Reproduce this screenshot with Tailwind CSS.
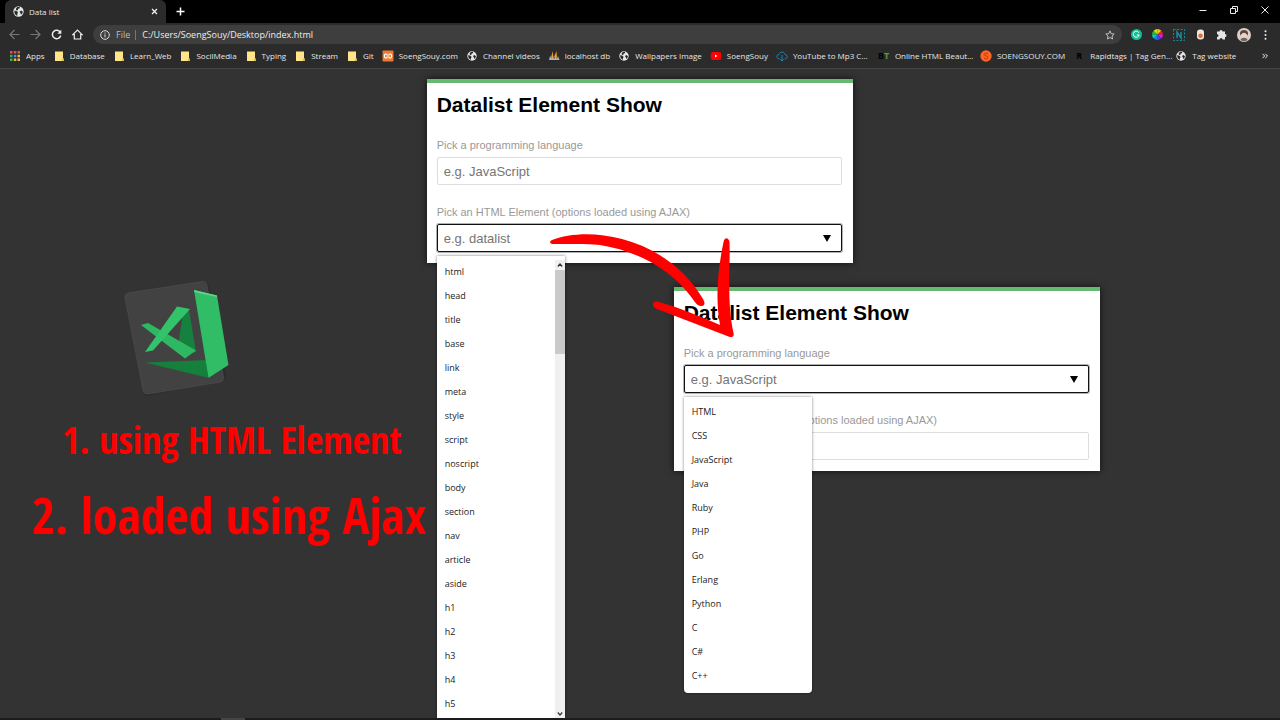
<!DOCTYPE html>
<html lang="en">
<head>
    <meta charset="UTF-8" />
    <meta name="viewport" content="width=device-width, initial-scale=1.0" />
    <title>Data list</title>
    <script src="https://cdn.jsdelivr.net/npm/@tailwindcss/browser@4"></script>
</head>
<body class="bg-[#333333] font-['Liberation_Sans',Arial,sans-serif]">
    <!-- Shared icons -->
    <svg class="hidden">
        <symbol id="globe" viewBox="0 0 16 16">
            <circle cx="8" cy="8" r="7.5" fill="#e8e8e8" />
            <path d="M2 6.500 6.500 8l.8 2.200-1 .8v3C3.500 13.500 1.500 11 2 6.500zM6 1.500l4-.3-.5 2.300-2 .5-.5 2-2 .5L4 4.500zM9.500 8l2.500-1.500 2.300 1.800c-.3 2.200-1.500 3.700-2.800 4.500L11 10.500z" fill="#2b2b2b" />
        </symbol>
        <symbol id="folder" viewBox="0 0 12 12">
            <path d="M2 1.500h8V8l.6.8V11H2z" fill="#ffe48a" />
            <path d="M8.800 8.500h1.800V11H8.800z" fill="#e6bf52" />
        </symbol>
    </svg>

    <div class="flex h-screen flex-col overflow-hidden">
        <header class="shrink-0 bg-[#2b2b2b] font-['Open_Sans','Noto_Sans',sans-serif] text-[9px] leading-3 text-[#e6e6e6]">
            <!-- Tabs -->
            <div class="flex h-[23px] items-center bg-black">
                <div class="ml-[5px] flex h-full w-[161px] items-center gap-[5px] rounded-t-md bg-[#2b2b2b] pr-2 pl-2 text-[8px]">
                    <svg class="size-[11px]"><use href="#globe" /></svg>
                    <span class="flex-1">Data list</span>
                    <button aria-label="Close tab">
                        <svg class="size-[7px]" viewBox="0 0 7 7" stroke="#f0f0f0" stroke-width="1.300"><path d="M1 1l5 5M6 1 1 6" /></svg>
                    </button>
                </div>
                <button class="ml-[10px]" aria-label="New tab">
                    <svg class="size-[9px]" viewBox="0 0 9 9" stroke="#fff" stroke-width="1.500"><path d="M4.500.5v8M.5 4.500h8" /></svg>
                </button>
                <div class="mr-[11px] ml-auto flex items-center gap-[23px] pb-[3px]">
                    <button aria-label="Minimize">
                        <svg class="size-2" viewBox="0 0 8 8" stroke="#eee"><path d="M.5 4.500h7" /></svg>
                    </button>
                    <button aria-label="Restore">
                        <svg class="size-2" viewBox="0 0 8 8" stroke="#eee" fill="none"><path d="M.5 2.500h5v5h-5zM2.500 2.500v-2h5v5h-2" /></svg>
                    </button>
                    <button aria-label="Close">
                        <svg class="size-2" viewBox="0 0 8 8" stroke="#eee"><path d="M.5.5l7 7M7.500.5l-7 7" /></svg>
                    </button>
                </div>
            </div>

            <!-- Toolbar -->
            <div class="flex h-[23px] items-center pr-[10px] pl-[9px]">
                <div class="flex w-[84px] items-center gap-[10px]">
                    <button aria-label="Back">
                        <svg class="size-[11px]" viewBox="0 0 11 11" fill="none" stroke="#777" stroke-width="1.200"><path d="M10.500 5.500H1M5.500 1 1 5.500 5.500 10" /></svg>
                    </button>
                    <button aria-label="Forward">
                        <svg class="size-[11px]" viewBox="0 0 11 11" fill="none" stroke="#777" stroke-width="1.200"><path d="M.5 5.500H10M5.500 1 10 5.500 5.500 10" /></svg>
                    </button>
                    <button aria-label="Reload">
                        <svg class="size-[11px]" viewBox="0 0 11 11" fill="none" stroke="#eee" stroke-width="1.500"><path d="M9.300 3.500A4.200 4.200 0 1 0 9.700 6.500" /><path d="M10.300.8v4H6.300z" fill="#eee" stroke="none" /></svg>
                    </button>
                    <button aria-label="Home">
                        <svg class="size-[11px]" viewBox="0 0 11 11" fill="none" stroke="#eee" stroke-width="1.200"><path d="M.8 5.700 5.500 1l4.700 4.700H8.700V10H2.300V5.700z" /></svg>
                    </button>
                </div>
                <div class="flex h-[19px] flex-1 items-center rounded-full bg-[#3e3e3e] pr-[7px] pl-[7px]">
                    <svg class="mr-[6px] size-[10px]" viewBox="0 0 10 10" fill="none" stroke="#ddd"><circle cx="5" cy="5" r="4.300" /><path d="M5 4.300v3M5 2.500v1" /></svg>
                    <span class="mr-[5px] text-[#bdbdbd]">File</span>
                    <span class="mr-[6px] h-[10px] w-px bg-[#777]"></span>
                    <input type="text" aria-label="Address" value="C:/Users/SoengSouy/Desktop/index.html" class="min-w-0 flex-1 bg-transparent text-[#eee] outline-none" />
                    <button aria-label="Bookmark this page">
                        <svg class="size-[10px]" viewBox="0 0 10 10" fill="none" stroke="#ccc" stroke-width=".9"><path d="M5 .9l1.200 2.800 3 .3L7 6l.6 3L5 7.500 2.400 9 3 6 .8 4l3-.3z" /></svg>
                    </button>
                </div>
                <div class="ml-[9px] flex items-center gap-[10px]">
                    <button aria-label="Grammar">
                        <svg class="size-[11px]" viewBox="0 0 11 11" fill="none"><circle cx="5.500" cy="5.500" r="5.500" fill="#13bf97" /><path d="M7.800 3.600A3 3 0 1 0 8.200 6H5.800" stroke="#fff" /></svg>
                    </button>
                    <button aria-label="Colour picker">
                        <svg class="size-[11px]" viewBox="0 0 12 12">
                            <path d="M6 6V0a6 6 0 0 1 4.200 1.800z" fill="#fb2" /><path d="M6 6l4.200-4.200A6 6 0 0 1 12 6z" fill="#e22" />
                            <path d="M6 6h6a6 6 0 0 1-1.800 4.200z" fill="#d2c" /><path d="M6 6l4.200 4.200A6 6 0 0 1 6 12z" fill="#53f" />
                            <path d="M6 6v6a6 6 0 0 1-4.200-1.800z" fill="#18d" /><path d="M6 6l-4.200 4.200A6 6 0 0 1 0 6z" fill="#1cc" />
                            <path d="M6 6H0a6 6 0 0 1 1.800-4.200z" fill="#3b3" /><path d="M6 6 1.800 1.800A6 6 0 0 1 6 0z" fill="#be2" />
                        </svg>
                    </button>
                    <button aria-label="Nimbus">
                        <svg class="size-[12px]" viewBox="0 0 12 12" fill="none" stroke="#168aa0"><path d="M.5.5h11v11H.5z" stroke-dasharray="2 1.500" /><path d="M4 9V3l4 6V3" stroke-width="1.500" /></svg>
                    </button>
                    <button aria-label="Sound">
                        <svg class="size-[11px]" viewBox="0 0 11 11"><rect x="2" y=".5" width="7" height="10" rx="3" fill="#f3e6dc" /><circle cx="5.500" cy="6.800" r="2.300" fill="#e0703a" /></svg>
                    </button>
                    <button aria-label="Extensions">
                        <svg class="size-[11px]" viewBox="0 0 11 11" fill="#e6e6e6"><path d="M1 2.500h2.500a1.500 1.500 0 0 1 3 0H9V5a1.500 1.500 0 0 1 0 3v2.500H6.600a1.500 1.500 0 0 0-3 0H1V8a1.500 1.500 0 0 0 0-3z" /></svg>
                    </button>
                    <button aria-label="Profile">
                        <svg class="size-[14px]" viewBox="0 0 14 14"><circle cx="7" cy="7" r="7" fill="#dccfca" /><path d="M3 5c0-4 8-4 8 0v2.500L9.500 6h-5L3 7.500z" fill="#5c4740" /><circle cx="7" cy="7" r="2.300" fill="#e9d3c8" /><path d="M3.500 12c.5-3 6.500-3 7 0-1.500 1.500-5.500 1.500-7 0z" fill="#6e625e" /></svg>
                    </button>
                    <button aria-label="Menu">
                        <svg class="h-[10px] w-[9px]" viewBox="0 0 9 10" fill="#eee"><circle cx="4.500" cy="1.300" r="1" /><circle cx="4.500" cy="5" r="1" /><circle cx="4.500" cy="8.700" r="1" /></svg>
                    </button>
                </div>
            </div>

            <!-- Bookmarks -->
            <nav class="flex h-[23px] items-center gap-2 border-b border-[#454545] pr-[12px] pb-[2px] pl-[9px] text-[8px] whitespace-nowrap">
                <a href="#" class="flex items-center gap-[5px]">
                    <svg class="size-[12px] shrink-0" viewBox="0 0 12 12">
                        <path d="M1 1h2.500v2.500H1zM4.800 1h2.500v2.500H4.800zM8.500 1H11v2.500H8.500z" fill="#e5544a" />
                        <path d="M1 4.800h2.500v2.500H1z" fill="#3fae62" /><path d="M4.800 4.800h2.500v2.500H4.800z" fill="#4a8df0" /><path d="M8.500 4.800H11v2.500H8.500z" fill="#f0b93a" />
                        <path d="M1 8.500h2.500V11H1z" fill="#3fae62" /><path d="M4.800 8.500h2.500V11H4.800zM8.500 8.500H11V11H8.500z" fill="#f0b93a" />
                    </svg>Apps</a>
                <a href="#" class="flex items-center gap-[5px]"><svg class="size-[12px] shrink-0"><use href="#folder" /></svg>Database</a>
                <a href="#" class="flex items-center gap-[5px]"><svg class="size-[12px] shrink-0"><use href="#folder" /></svg>Learn_Web</a>
                <a href="#" class="flex items-center gap-[5px]"><svg class="size-[12px] shrink-0"><use href="#folder" /></svg>SocilMedia</a>
                <a href="#" class="flex items-center gap-[5px]"><svg class="size-[12px] shrink-0"><use href="#folder" /></svg>Typing</a>
                <a href="#" class="flex items-center gap-[5px]"><svg class="size-[12px] shrink-0"><use href="#folder" /></svg>Stream</a>
                <a href="#" class="flex items-center gap-[5px]"><svg class="size-[12px] shrink-0"><use href="#folder" /></svg>Git</a>
                <a href="#" class="flex items-center gap-[5px]">
                    <svg class="size-[12px] shrink-0" viewBox="0 0 12 12" fill="none" stroke="#fff" stroke-width="1.200"><rect x=".5" y=".5" width="11" height="11" rx="1" fill="#ee7a30" stroke="none" /><path d="M5.500 4.500C4 3.500 2.300 4 2.300 6s1.700 2.500 3.200 1.500M6.500 4.500c1.500-1 3.200-.5 3.200 1.500s-1.700 2.500-3.200 1.500M4.500 6h3" /></svg>SoengSouy.com</a>
                <a href="#" class="flex items-center gap-[5px]"><svg class="size-[12px] shrink-0 p-px"><use href="#globe" /></svg>Channel videos</a>
                <a href="#" class="flex items-center gap-[5px]">
                    <svg class="size-[12px] shrink-0" viewBox="0 0 12 12"><path d="M3 7 5 1v7zM6 7l2.500-6L9 8z" fill="#f29a24" /><path d="M1 10 2 6l1.500 2L5 5l1 4 1.500-3L9 9l1-3 1.500 4z" fill="#b5b0aa" /></svg>localhost db</a>
                <a href="#" class="flex items-center gap-[5px]"><svg class="size-[12px] shrink-0 p-px"><use href="#globe" /></svg>Wallpapers Image</a>
                <a href="#" class="flex items-center gap-[5px]">
                    <svg class="size-[12px] shrink-0" viewBox="0 0 12 12"><rect x=".8" y="2" width="10.400" height="8" rx="2" fill="#f00" /><path d="M5 4.500v3L7.500 6z" fill="#fff" /></svg>SoengSouy</a>
                <a href="#" class="flex w-[94px] items-center gap-[5px]">
                    <svg class="size-[12px] shrink-0" viewBox="0 0 12 12" fill="none" stroke="#1c87b8"><path d="M3.500 9C-.3 8.500.5 4.500 3 4.500 4 1 8.500 1.500 9 4.500c3 .3 3 4.500-.5 4.500M6 5v6M4.300 9.300 6 11l1.700-1.700" /></svg>YouTube to Mp3 C...</a>
                <a href="#" class="flex w-[94px] items-center gap-[5px]">
                    <span class="w-[12px] shrink-0 text-[9px] font-bold text-black" aria-hidden="true">B<span class="text-[#5f9a35]">T</span></span>Online HTML Beaut...</a>
                <a href="#" class="flex items-center gap-[5px]">
                    <svg class="size-[12px] shrink-0" viewBox="0 0 12 12" fill="none"><circle cx="6" cy="6" r="5.700" fill="#ff6422" /><path d="M8 4C7 2.800 4.200 3 4.200 4.600 4.200 6.300 8 5.500 8 7.400S4.800 9.200 4 8" stroke="#b53a10" /></svg>SOENGSOUY.COM</a>
                <a href="#" class="flex w-[94px] items-center gap-[5px]">
                    <span class="w-[12px] shrink-0 text-center text-[9px] font-bold text-black" aria-hidden="true">R</span>Rapidtags | Tag Gen...</a>
                <a href="#" class="flex items-center gap-[5px]"><svg class="size-[12px] shrink-0 p-px"><use href="#globe" /></svg>Tag website</a>
                <button class="ml-auto" aria-label="More bookmarks">
                    <svg class="size-[6px]" viewBox="0 0 6 6" fill="none" stroke="#eee"><path d="M.5.8 2.700 3 .5 5.200M3.300.8 5.500 3 3.300 5.200" /></svg>
                </button>
            </nav>
        </header>

        <main class="grid min-h-0 flex-1 grid-cols-3">
            <!-- Logo and slogans -->
            <section class="flex flex-col items-end pt-[208px] text-right font-['Open_Sans_Condensed','Liberation_Sans_Narrow',sans-serif] font-bold whitespace-nowrap text-[#ff0000]">
                <svg class="mr-[187px] h-[130px] w-[120px]" viewBox="0 0 120 130">
                    <path d="M8 17.500 84 5.500q4-.5 5 3.500l17 89q.5 4-3 5L28 119q-4 .5-5-3.500L5 22q-.5-4 3-4.500z" fill="#282828" opacity=".6" />
                    <path d="M8 16 82 4.500q4-.5 5 3.500l16.500 92q.5 4-3 5L28 117q-4 .5-5-3.500L5 21q-.5-4 3-5z" fill="#424242" stroke="#515151" stroke-width=".6" />
                    <path d="M63 35 69 33 76 75 66 77 58 70z" fill="#16803e" />
                    <path d="M21 48 28 46 76 73.500 65 81.500z" fill="#2fb862" />
                    <path d="M25 75 57 29.500 70 32 33 73.500z" fill="#33c36b" />
                    <path d="M25 85.500 89 83 89 101z" fill="#14803c" />
                    <path d="M75 13 97 18.500 108.500 88 88.500 101.500z" fill="#252525" opacity=".5" />
                    <path d="M74 13 97 18.500 108.500 88 88.500 101z" fill="#31bd66" />
                    <path d="M74 13 97 18.500v1.500L74.500 15z" fill="#62d68e" />
                </svg>
                <p class="mt-1 mr-[25px] text-[38px] leading-[56px]">1. using HTML Element</p>
                <p class="mt-[18px] text-[50px] leading-[60px]">2. loaded using Ajax</p>
            </section>

            <section class="relative col-span-2 pt-[10px]">
                <form class="w-1/2 border-t-4 border-[#65b970] bg-white pt-[9px] pr-[11px] pb-[11px] pl-[10px] shadow-[0_0_7px_#000000b3]">
                    <h1 class="text-[21px] leading-[26px] font-bold">Datalist Element Show</h1>
                    <label for="language" class="mt-[20px] block text-[11px] leading-[14px] text-[#999]">Pick a programming language</label>
                    <input id="language" type="text" placeholder="e.g. JavaScript" class="mt-[5px] block h-[28px] w-full rounded-xs border border-[#ddd] px-[6px] text-[13px] outline-none placeholder:text-[#757575]" />
                    <label for="element" class="mt-[20px] block text-[11px] leading-[14px] text-[#999]">Pick an HTML Element (options loaded using AJAX)</label>
                    <div class="relative mt-[5px]">
                        <input id="element" type="text" placeholder="e.g. datalist" class="block h-[28px] w-full rounded-xs border border-[#111] px-[6px] text-[13px] ring-1 ring-black/30 outline-none placeholder:text-[#757575]" />
                        <svg class="absolute top-[11px] right-[11px] h-[7px] w-[8px]" viewBox="0 0 8 7"><path d="M0 0h8L4 7z" /></svg>
                        <div class="absolute top-[32px] left-0 z-10 flex w-[128px] bg-white font-['Open_Sans','Noto_Sans',sans-serif] text-[9px] leading-6 text-[#222] shadow-[0_0_3px_#00000080]">
                            <ul class="flex-1 pt-1 pb-[2px] pl-2">
                                <li>html</li>
                                <li>head</li>
                                <li>title</li>
                                <li>base</li>
                                <li>link</li>
                                <li>meta</li>
                                <li>style</li>
                                <li>script</li>
                                <li>noscript</li>
                                <li>body</li>
                                <li>section</li>
                                <li>nav</li>
                                <li>article</li>
                                <li>aside</li>
                                <li>h1</li>
                                <li>h2</li>
                                <li>h3</li>
                                <li>h4</li>
                                <li>h5</li>
                            </ul>
                            <div class="mt-1 flex w-[10px] flex-col items-center bg-[#f0f0f0]">
                                <svg class="h-[10px] w-[6px] shrink-0" viewBox="0 0 6 10" fill="none" stroke="#333" stroke-width="1.200"><path d="M.8 6.500 3 4l2.200 2.500" /></svg>
                                <div class="h-[84px] w-full bg-[#cacaca]"></div>
                                <svg class="mt-auto h-[10px] w-[6px] shrink-0" viewBox="0 0 6 10" fill="none" stroke="#333" stroke-width="1.200"><path d="M.8 4.500 3 7l2.200-2.500" /></svg>
                            </div>
                        </div>
                    </div>
                </form>

                <form class="mt-6 ml-[247px] w-1/2 border-t-4 border-[#65b970] bg-white pt-[9px] pr-[11px] pb-[11px] pl-[10px] shadow-[0_0_7px_#000000b3]">
                    <h1 class="text-[21px] leading-[26px] font-bold">Datalist Element Show</h1>
                    <label for="language2" class="mt-[20px] block text-[11px] leading-[14px] text-[#999]">Pick a programming language</label>
                    <div class="relative mt-[5px]">
                        <input id="language2" type="text" placeholder="e.g. JavaScript" class="block h-[28px] w-full rounded-xs border border-[#111] px-[6px] text-[13px] ring-1 ring-black/30 outline-none placeholder:text-[#757575]" />
                        <svg class="absolute top-[11px] right-[11px] h-[7px] w-[8px]" viewBox="0 0 8 7"><path d="M0 0h8L4 7z" /></svg>
                        <ul class="absolute top-[32px] left-0 z-10 w-[128px] rounded-b-sm bg-white pt-[3px] pb-[5px] pl-2 font-['Open_Sans','Noto_Sans',sans-serif] text-[9px] leading-6 text-[#222] shadow-[0_0_3px_#00000080]">
                            <li>HTML</li>
                            <li>CSS</li>
                            <li>JavaScript</li>
                            <li>Java</li>
                            <li>Ruby</li>
                            <li>PHP</li>
                            <li>Go</li>
                            <li>Erlang</li>
                            <li>Python</li>
                            <li>C</li>
                            <li>C#</li>
                            <li>C++</li>
                        </ul>
                    </div>
                    <label for="element2" class="mt-[20px] block text-[11px] leading-[14px] text-[#999]">Pick an HTML Element (options loaded using AJAX)</label>
                    <input id="element2" type="text" class="mt-[5px] block h-[28px] w-full rounded-xs border border-[#ddd] px-[6px] text-[13px] outline-none" />
                </form>

                <!-- Arrow from the first form to the second -->
                <svg class="pointer-events-none absolute top-[161px] left-[123px] z-20 h-[110px] w-[190px]" viewBox="0 0 190 110" fill="#ff0000">
                    <path d="M2 10C20 3 46 2 72 9c35 9 64 31 81 60 3 5 1 7-2 7-4 0-6-4-9-8C122 40 88 21 50 15 32 13 16 14.500 4 14-.5 14-1 11.500 2 10z" />
                    <path d="M173.500 12c1-5 5-5 6 0 1 26-3 59 4 91 1 3-1 5-5 3.500L107 79c-7-3-4-9 2-7 21 6 41 14 61 23-5-29-2-56 3.500-83z" />
                </svg>
            </section>
        </main>
        <footer class="relative z-30 flex h-[2px] shrink-0 bg-[#1c1a1a]">
            <span class="ml-[221px] w-[24px] bg-[#444]"></span>
        </footer>
    </div>
</body>
</html>
